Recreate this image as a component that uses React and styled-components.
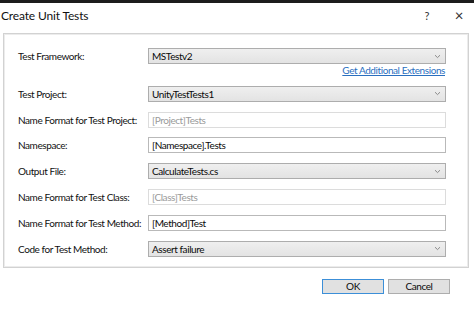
import React from "react";
import styled, { createGlobalStyle } from "styled-components";

const Global = createGlobalStyle`
  html, body { margin: 0; padding: 0; background: #ffffff; }
  body { font-family: Lato, "Noto Sans", sans-serif; color: #111; }
  * { box-sizing: border-box; }
`;

const Window = styled.div`
  width: 474px;
  height: 310px;
  background: #ffffff;
  border-top: 3px solid #1c1c1c;
  display: flex;
  flex-direction: column;
`;

const TitleBar = styled.div`
  height: 30px;
  display: flex;
  align-items: center;
  padding: 0 1px 5px 1px;
  font-size: 12px;
  letter-spacing: -0.15px;
  color: #111;
`;

const Title = styled.div`
  flex: 1;
`;

const TitleButton = styled.div`
  width: ${(p) => (p.$big ? "28px" : "36px")};
  text-align: center;
  font-size: ${(p) => (p.$big ? "15px" : "11px")};
  color: #333;
  line-height: 1;
`;

const Panel = styled.div`
  margin: 0 5px 0 3px;
  height: 235px;
  border: 1px solid #d2d2d2;
  box-shadow: inset 0 0 0 1px #ececec;
  padding: 14px 22px 0 14px;
  display: flex;
  flex-direction: column;
  gap: 9.8px;
`;

const Row = styled.div`
  display: grid;
  grid-template-columns: 130px 1fr;
  align-items: start;
`;

const textStyle = `
  font-size: 10px;
  letter-spacing: -0.42px;
`;

const Label = styled.div`
  ${textStyle}
  line-height: 16px;
  height: 16px;
  color: #111;
  white-space: nowrap;
`;

const FieldCol = styled.div`
  display: flex;
  flex-direction: column;
`;

const Combo = styled.div`
  ${textStyle}
  height: 16px;
  border: 1px solid #adadad;
  background: linear-gradient(#efefef, #e3e3e3);
  display: flex;
  align-items: center;
  padding: 0 4px 0 3px;
  color: #0a0a0a;
`;

const TextBox = styled.div`
  ${textStyle}
  height: 16px;
  border: 1px solid ${(p) => (p.$disabled ? "#dcdcdc" : "#b9b9b9")};
  background: #ffffff;
  display: flex;
  align-items: center;
  padding: 0 3px;
  color: ${(p) => (p.$disabled ? "#9a9a9a" : "#0a0a0a")};
`;

const Value = styled.span`
  flex: 1;
  white-space: nowrap;
`;

const Chevron = () => (
  <svg width="7" height="5" viewBox="0 0 7 5">
    <path d="M1 1.2 L3.5 3.6 L6 1.2" fill="none" stroke="#8a8a8a" strokeWidth="1" />
  </svg>
);

const Link = styled.a`
  ${textStyle}
  align-self: flex-end;
  line-height: 12px;
  color: #2a6fbf;
  text-decoration: underline;
  margin-right: 1px;
`;

const Footer = styled.div`
  display: flex;
  justify-content: flex-end;
  gap: 4px;
  padding: 11px 24px 0 0;
`;

const Button = styled.button`
  ${textStyle}
  width: 62px;
  height: 15px;
  padding: 0;
  font-family: inherit;
  line-height: 13px;
  color: #0a0a0a;
  background: #e1e1e1;
  border: 1px solid ${(p) => (p.$primary ? "#3c8fd8" : "#adadad")};
`;

const fields = [
  { label: "Test Project:", value: "UnityTestTests1", kind: "combo" },
  { label: "Name Format for Test Project:", value: "[Project]Tests", kind: "text", disabled: true },
  { label: "Namespace:", value: "[Namespace].Tests", kind: "text" },
  { label: "Output File:", value: "CalculateTests.cs", kind: "combo" },
  { label: "Name Format for Test Class:", value: "[Class]Tests", kind: "text", disabled: true },
  { label: "Name Format for Test Method:", value: "[Method]Test", kind: "text" },
  { label: "Code for Test Method:", value: "Assert failure", kind: "combo" },
];

export default function App() {
  return (
    <>
      <Global />
      <Window>
        <TitleBar>
          <Title>Create Unit Tests</Title>
          <TitleButton>?</TitleButton>
          <TitleButton $big>×</TitleButton>
        </TitleBar>
        <Panel>
          <Row>
            <Label>Test Framework:</Label>
            <FieldCol>
              <Combo>
                <Value>MSTestv2</Value>
                <Chevron />
              </Combo>
              <Link>Get Additional Extensions</Link>
            </FieldCol>
          </Row>
          {fields.map((f) => (
            <Row key={f.label}>
              <Label>{f.label}</Label>
              {f.kind === "combo" ? (
                <Combo>
                  <Value>{f.value}</Value>
                  <Chevron />
                </Combo>
              ) : (
                <TextBox $disabled={f.disabled}>
                  <Value>{f.value}</Value>
                </TextBox>
              )}
            </Row>
          ))}
        </Panel>
        <Footer>
          <Button $primary>OK</Button>
          <Button>Cancel</Button>
        </Footer>
      </Window>
    </>
  );
}
